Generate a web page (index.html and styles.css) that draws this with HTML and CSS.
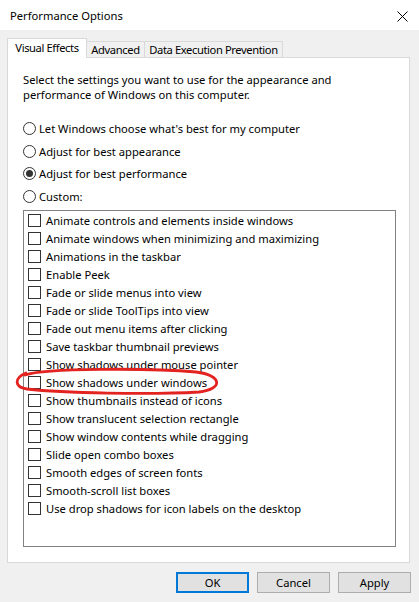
FILE: index.html
```html
<!DOCTYPE html>
<html lang="en">
<head>
<meta charset="utf-8">
<title>Performance Options</title>
<link rel="stylesheet" href="styles.css">
</head>
<body>
<div class="window">
  <div class="titlebar">
    <span class="title">Performance Options</span>
    <svg class="close" width="11" height="11" viewBox="0 0 11 11"><path d="M0.5 0.5 L10.5 10.5 M10.5 0.5 L0.5 10.5" stroke="#000" stroke-width="1" fill="none"/></svg>
  </div>
  <div class="content">
    <div class="tabs">
      <div class="tab active">Visual Effects</div>
      <div class="tab adv">Advanced</div>
      <div class="tab dep">Data Execution Prevention</div>
    </div>
    <div class="panel">
      <p class="intro">Select the settings you want to use for the appearance and<br>performance of Windows on this computer.</p>
      <div class="radios">
        <div class="radio-row"><span class="radio"></span>Let Windows choose what's best for my computer</div>
        <div class="radio-row"><span class="radio"></span>Adjust for best appearance</div>
        <div class="radio-row"><span class="radio checked"></span>Adjust for best performance</div>
        <div class="radio-row"><span class="radio"></span>Custom:</div>
      </div>
      <div class="listbox">
        <div class="item"><span class="check"></span>Animate controls and elements inside windows</div>
        <div class="item"><span class="check"></span>Animate windows when minimizing and maximizing</div>
        <div class="item"><span class="check"></span>Animations in the taskbar</div>
        <div class="item"><span class="check"></span>Enable Peek</div>
        <div class="item"><span class="check"></span>Fade or slide menus into view</div>
        <div class="item"><span class="check"></span>Fade or slide ToolTips into view</div>
        <div class="item"><span class="check"></span>Fade out menu items after clicking</div>
        <div class="item"><span class="check"></span>Save taskbar thumbnail previews</div>
        <div class="item"><span class="check"></span>Show shadows under mouse pointer</div>
        <div class="item"><span class="check"></span>Show shadows under windows</div>
        <div class="item"><span class="check"></span>Show thumbnails instead of icons</div>
        <div class="item"><span class="check"></span>Show translucent selection rectangle</div>
        <div class="item"><span class="check"></span>Show window contents while dragging</div>
        <div class="item"><span class="check"></span>Slide open combo boxes</div>
        <div class="item"><span class="check"></span>Smooth edges of screen fonts</div>
        <div class="item"><span class="check"></span>Smooth-scroll list boxes</div>
        <div class="item"><span class="check"></span>Use drop shadows for icon labels on the desktop</div>
      </div>
    </div>
  </div>
  <div class="buttons">
    <button class="btn default">OK</button>
    <button class="btn">Cancel</button>
    <button class="btn">Apply</button>
  </div>
  <svg class="annotation" width="419" height="602" viewBox="0 0 419 602">
    <path d="M25 375 C45 368 150 368 196 372 C222 375 224 389 199 392 C150 395 62 393 27 389 C14 387 14 378 26 373" fill="none" stroke="#e3231f" stroke-width="2.8" stroke-linecap="round"/>
  </svg>
</div>
</body>
</html>
```
FILE: styles.css
```css
* { box-sizing: border-box; }
html, body { margin: 0; padding: 0; }
body {
  width: 419px;
  height: 602px;
  overflow: hidden;
  background: #f0f0f0;
  font-family: "Noto Sans", "Open Sans", sans-serif;
  font-size: 11.2px;
  color: #000;
}
.window {
  position: relative;
  width: 419px;
  height: 602px;
  display: flex;
  flex-direction: column;
}
.titlebar {
  height: 30px;
  background: #fff;
  display: flex;
  align-items: center;
  justify-content: space-between;
  padding: 0 11px 0 10px;
}
.title { line-height: 15px; padding-top: 1px; }
.close { display: block; margin-top: 2px; }
.content {
  padding: 8px 9px 0 7px;
  display: flex;
  flex-direction: column;
}
.tabs {
  display: flex;
  align-items: flex-start;
  height: 20px;
  margin-bottom: -1px;
  position: relative;
  z-index: 1;
}
.tab {
  height: 16px;
  margin-top: 3px;
  margin-left: -1px;
  border: 1px solid #d9d9d9;
  border-bottom: none;
  background: #f0f0f0;
  display: flex;
  align-items: center;
  justify-content: center;
  white-space: nowrap;
  line-height: 14px;
  letter-spacing: -0.4px;
  flex: none;
}
.tab.active {
  height: 20px;
  margin-top: 0;
  margin-left: 0;
  width: 80px;
  background: #fff;
  position: relative;
  z-index: 2;
  padding-bottom: 1px;
}
.tab.adv { width: 59px; }
.tab.dep { width: 139px; }
.panel {
  height: 506px;
  background: #fff;
  border: 1px solid #d9d9d9;
  padding: 14px 13px 15px 15px;
  display: flex;
  flex-direction: column;
}
.intro {
  margin: 0;
  line-height: 15px;
  white-space: nowrap;
}
.radios {
  margin-top: 15px;
  display: flex;
  flex-direction: column;
}
.radio-row {
  height: 22.7px;
  display: flex;
  align-items: center;
  white-space: nowrap;
}
.radio {
  width: 13px;
  height: 13px;
  border: 1px solid #333;
  border-radius: 50%;
  margin-right: 3px;
  background: #fff;
  display: flex;
  align-items: center;
  justify-content: center;
  flex: none;
}
.radio.checked::after {
  content: "";
  width: 7px;
  height: 7px;
  border-radius: 50%;
  background: #333;
}
.listbox {
  margin-top: 2px;
  flex: 1;
  border: 1px solid #828282;
  padding: 1px 0 0 4px;
  display: flex;
  flex-direction: column;
}
.item {
  height: 18px;
  display: flex;
  align-items: center;
  white-space: nowrap;
}
.check {
  width: 13px;
  height: 13px;
  border: 1px solid #333;
  background: #fff;
  margin-right: 5px;
  flex: none;
}
.buttons {
  display: flex;
  justify-content: flex-end;
  gap: 8px;
  padding: 9px 8px 0 0;
}
.btn {
  width: 73px;
  height: 21px;
  background: #e1e1e1;
  border: 1px solid #adadad;
  font-family: inherit;
  font-size: 11.2px;
  color: #000;
  padding: 0;
  line-height: 14px;
}
.btn.default { border: 2px solid #0078d7; }
.annotation {
  position: absolute;
  left: 0;
  top: 0;
  pointer-events: none;
}
```
